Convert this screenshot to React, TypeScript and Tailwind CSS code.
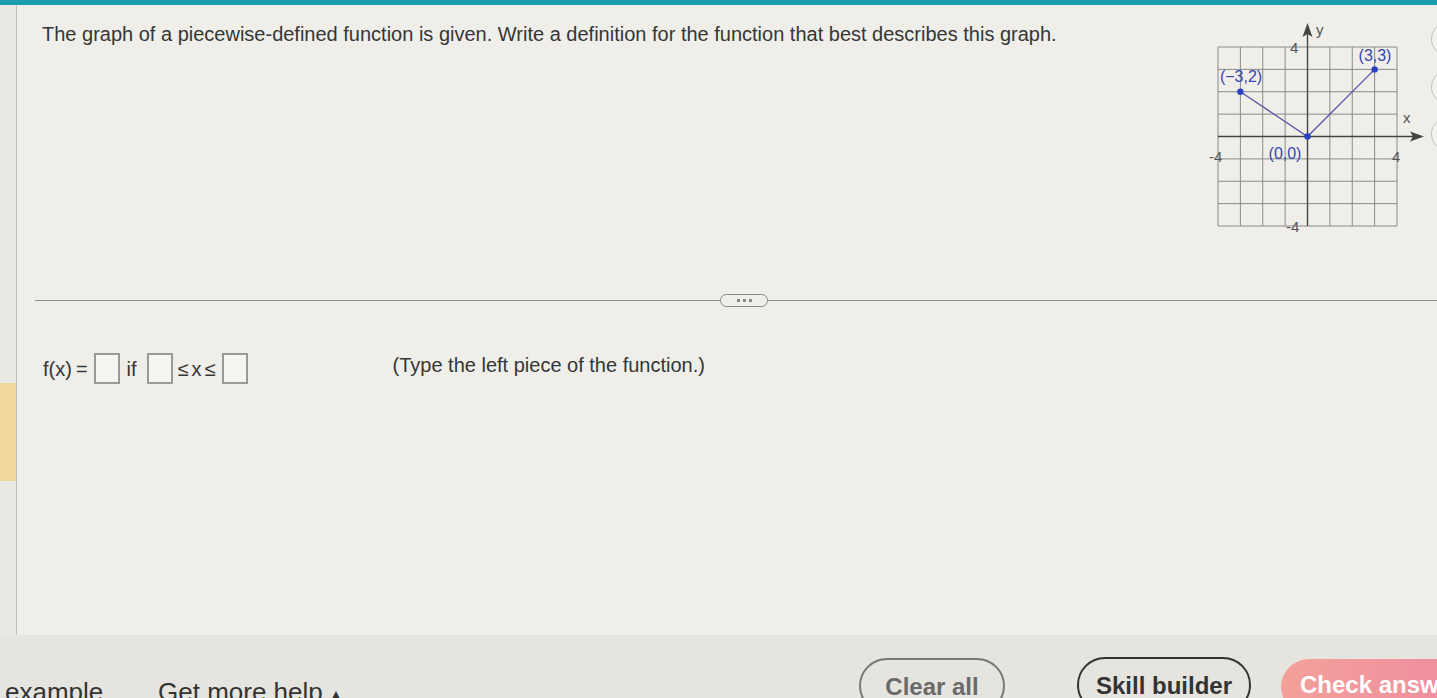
import React from "react";

function Graph() {
  const left = 18;
  const top = 37;
  const cell = 22.375;
  const lines = Array.from({ length: 9 }, (_, i) => i);
  const ox = left + 4 * cell;
  const oy = top + 4 * cell;
  const px = (x: number) => ox + x * cell;
  const py = (y: number) => oy - y * cell;
  return (
    <svg width="232" height="232" viewBox="0 0 232 232" className="shrink-0">
      {lines.map((i) => (
        <line key={"v" + i} x1={left + i * cell} y1={top} x2={left + i * cell} y2={top + 8 * cell} stroke="#8a8a88" strokeWidth="1" />
      ))}
      {lines.map((i) => (
        <line key={"h" + i} x1={left} y1={top + i * cell} x2={left + 8 * cell} y2={top + i * cell} stroke="#8a8a88" strokeWidth="1" />
      ))}
      <line x1={left} y1={oy} x2={216} y2={oy} stroke="#444" strokeWidth="1.4" />
      <path d={`M224 ${oy} L210 ${oy - 5} L213 ${oy} L210 ${oy + 5} Z`} fill="#444" />
      <line x1={ox} y1={top + 8 * cell} x2={ox} y2={21} stroke="#444" strokeWidth="1.4" />
      <path d={`M${ox} 13 L${ox - 5} 27 L${ox} 24 L${ox + 5} 27 Z`} fill="#444" />
      <g fontFamily="Liberation Sans, Arial, sans-serif" fontSize="15" fill="#555">
        <text x="116" y="25">y</text>
        <text x="203" y="113">x</text>
        <text x="90" y="43">4</text>
        <text x="9" y="152">-4</text>
        <text x="192" y="152">4</text>
        <text x="86" y="222">-4</text>
      </g>
      <polyline points={`${px(-3)},${py(2)} ${px(0)},${py(0)} ${px(3)},${py(3)}`} fill="none" stroke="#5a5aa8" strokeWidth="1.4" />
      <circle cx={px(-3)} cy={py(2)} r="3.2" fill="#2b3fc4" />
      <circle cx={px(0)} cy={py(0)} r="3.2" fill="#2b3fc4" />
      <circle cx={px(3)} cy={py(3)} r="3.2" fill="#2b3fc4" />
      <g fontFamily="Liberation Sans, Arial, sans-serif" fontSize="16" fill="#3646b0">
        <text x="41" y="72" textAnchor="middle">(−3,2)</text>
        <text x="85" y="149" textAnchor="middle">(0,0)</text>
        <text x="175" y="51" textAnchor="middle">(3,3)</text>
      </g>
    </svg>
  );
}

function Box() {
  return <span className="inline-block w-[26px] h-[31px] border-2 border-[#9a9a98] bg-[#f6f5f1]" />;
}

export default function App() {
  return (
    <div className="relative w-[1437px] h-[698px] overflow-hidden bg-[#efeee9] text-[#363636]" style={{ fontFamily: "'Liberation Sans', Arial, sans-serif" }}>
      <div className="h-[5px] bg-[#1c9db2]" />
      <div className="flex h-[630px]">
        <div className="w-[17px] shrink-0 border-r border-[#bdbcb7] bg-[#ebe9e3] flex flex-col">
          <div className="h-[378px]" />
          <div className="h-[98px] bg-[#f1d99e]" />
        </div>
        <div className="flex-1 flex flex-col">
          <div className="flex h-[289px]">
            <div className="flex-1 pl-[25px] pt-[17px] text-[20px] leading-[24px]">
              The graph of a piecewise-defined function is given. Write a definition for the function that best describes this graph.
            </div>
            <div className="pt-[5px] pr-[5px]">
              <Graph />
            </div>
          </div>
          <div className="flex items-center ml-[18px] h-[13px]">
            <div className="w-[685px] h-px bg-[#8e8d89]" />
            <div className="w-[48px] h-[13px] rounded-full border-[1.5px] border-[#8a8986] flex items-center justify-center gap-[3px]">
              <span className="w-[3px] h-[3px] bg-[#8a8986]" />
              <span className="w-[3px] h-[3px] bg-[#8a8986]" />
              <span className="w-[3px] h-[3px] bg-[#8a8986]" />
            </div>
            <div className="flex-1 h-px bg-[#8e8d89]" />
          </div>
          <div className="flex items-center mt-[46px] pl-[26px] text-[20px]">
            <span>f(x)</span>
            <span className="ml-[4px] mr-[6px]">=</span>
            <Box />
            <span className="ml-[7px] mr-[10px]">if</span>
            <Box />
            <span className="ml-[5px] mr-[3px] tracking-[3px]">≤x≤</span>
            <Box />
            <span className="ml-[145px] -mt-[8px]">(Type the left piece of the function.)</span>
          </div>
        </div>
      </div>
      <div className="h-[63px] bg-[#e5e4df] flex items-start relative">
        <span className="absolute left-[5px] top-[42px] text-[26px] leading-[30px] text-[#333]">example</span>
        <span className="absolute left-[158px] top-[42px] text-[26px] leading-[30px] text-[#333]">Get more help <span className="text-[12px] align-middle">▲</span></span>
        <div className="absolute left-[859px] top-[23px] w-[146px] h-[56px] rounded-full border-2 border-[#777] flex justify-center pt-[9px] text-[24px] font-bold text-[#6a6a6a]">Clear all</div>
        <div className="absolute left-[1077px] top-[22px] w-[174px] h-[56px] rounded-full border-2 border-[#333] flex justify-center pt-[9px] text-[24px] font-bold text-[#333]">Skill builder</div>
        <div className="absolute left-[1281px] top-[24px] w-[200px] h-[56px] rounded-full bg-gradient-to-r from-[#f3a19a] to-[#ef8aa0] pl-[19px] pt-[8px] text-[24px] font-bold text-white whitespace-nowrap">Check answer</div>
      </div>
      <div className="absolute left-[1431px] top-[22px] w-[40px] h-[34px] rounded-full border border-[#c4c3be] bg-[#f3f2ee]" />
      <div className="absolute left-[1431px] top-[70px] w-[40px] h-[34px] rounded-full border border-[#c4c3be] bg-[#f3f2ee]" />
      <div className="absolute left-[1431px] top-[117px] w-[40px] h-[34px] rounded-full border border-[#c4c3be] bg-[#f3f2ee]" />
    </div>
  );
}
